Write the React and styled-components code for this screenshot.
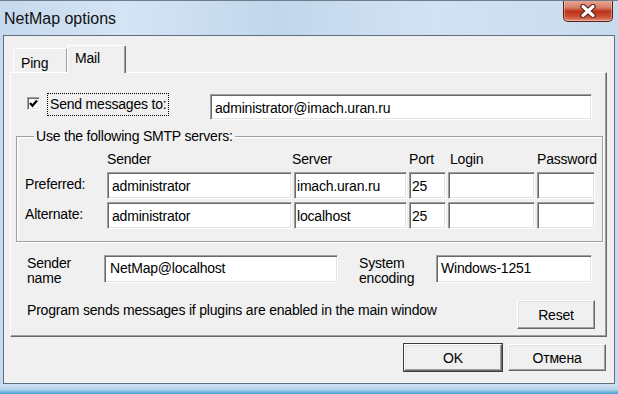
import React from "react";
import styled, { createGlobalStyle } from "styled-components";

const GlobalStyle = createGlobalStyle`
  html, body {
    margin: 0;
    padding: 0;
    background: #c8dcef;
  }
  body {
    font-family: "Liberation Sans", Arial, sans-serif;
    font-size: 14px;
    letter-spacing: -0.2px;
    color: #000;
  }
`;

const WindowDiv = styled.div`
  width: 618px;
  height: 394px;
  display: flex;
  flex-direction: column;
  box-sizing: border-box;
  border-top: 1px solid #6d7d8e;
  background: linear-gradient(
    90deg,
    #c6d9ed 0%,
    #d4e4f4 20%,
    #c2d7ec 45%,
    #d2e2f3 70%,
    #c8dbee 100%
  );
  overflow: hidden;
`;

const TitleBarDiv = styled.div`
  height: 34px;
  display: flex;
  align-items: flex-start;
  padding-left: 4px;
`;

const TitleSpan = styled.span`
  margin-top: 9px;
  font-size: 16px;
  letter-spacing: 0;
  color: #111;
`;

const CloseButton = styled.div`
  margin-left: auto;
  margin-right: 5px;
  margin-top: -1px;
  width: 48px;
  height: 21px;
  display: flex;
  align-items: center;
  justify-content: center;
  border: 1px solid #5b1d12;
  border-top: none;
  border-radius: 0 0 5px 5px;
  background: linear-gradient(
    180deg,
    #e8ab98 0%,
    #d7806a 35%,
    #bd3219 55%,
    #cb5033 80%,
    #de9078 100%
  );
  box-shadow: inset 0 0 0 1px rgba(255, 255, 255, 0.35);
`;

const ClientDiv = styled.div`
  margin: 0 3px;
  height: 349px;
  box-sizing: border-box;
  border: 1px solid #5f6f80;
  background: #f0f0f0;
  display: flex;
  flex-direction: column;
`;

const BottomFrameDiv = styled.div`
  flex: 1;
  background: linear-gradient(180deg, #d4e3f3 0%, #b4d1ea 55%, #3f9fd4 100%);
`;

const TabRowDiv = styled.div`
  display: flex;
  align-items: flex-end;
  height: 28px;
  margin-top: 9px;
  padding-left: 9px;
  position: relative;
  z-index: 1;
  margin-bottom: -1px;
`;

const Tab = styled.div`
  box-sizing: border-box;
  width: ${(p) => p.$width}px;
  height: ${(p) => (p.$active ? 28 : 24)}px;
  margin-bottom: ${(p) => (p.$active ? 0 : 1)}px;
  padding: ${(p) => (p.$active ? "4px 0 0 7px" : "6px 0 0 7px")};
  background: #f0f0f0;
  border-top: 1px solid #fff;
  border-left: 1px solid #fff;
  border-right: 1px solid ${(p) => (p.$active ? "#696969" : "#a0a0a0")};
  box-shadow: ${(p) => (p.$active ? "inset -1px 0 #a0a0a0" : "none")};
  border-radius: 2px 2px 0 0;
`;

const PanelDiv = styled.div`
  margin: 0 7px 0 6px;
  height: 265px;
  box-sizing: border-box;
  border-top: 1px solid #fff;
  border-left: 1px solid #fff;
  border-right: 1px solid #696969;
  border-bottom: 1px solid #696969;
  box-shadow: inset -1px -1px #a0a0a0;
  display: flex;
  flex-direction: column;
`;

const CheckRowDiv = styled.div`
  display: flex;
  align-items: flex-start;
  margin-top: 21px;
  padding-left: 16px;
`;

const CheckGroupDiv = styled.div`
  width: 183px;
  display: flex;
  align-items: flex-start;
`;

const CheckBox = styled.div`
  width: 13px;
  height: 13px;
  box-sizing: border-box;
  margin-top: 3px;
  background: #fff;
  border: 1px solid;
  border-color: #a0a0a0 #fff #fff #a0a0a0;
  box-shadow: inset 1px 1px #696969, inset -1px -1px #e3e3e3;
  display: flex;
  align-items: center;
  justify-content: center;
`;

const FocusLabel = styled.span`
  margin-left: 7px;
  margin-top: -1px;
  padding: 2px 2px 3px 2px;
  border: 1px dotted #000;
  line-height: 16px;
`;

const TextBox = styled.div`
  box-sizing: border-box;
  width: ${(p) => p.$width}px;
  height: ${(p) => p.$height || 27}px;
  background: #fff;
  border: 1px solid;
  border-color: #a0a0a0 #fff #fff #a0a0a0;
  box-shadow: inset 1px 1px #696969, inset -1px -1px #e3e3e3;
  padding: ${(p) => p.$pad || "5px 0 0 4px"};
  white-space: nowrap;
  overflow: hidden;
  line-height: 16px;
`;

const GroupFieldset = styled.fieldset`
  margin: 8px 3px 0 5px;
  padding: 8px 8px 12px 10px;
  border: 1px solid #a0a0a0;
  box-shadow: inset 1px 1px #fff, 1px 1px #fff;
  min-width: 0;
`;

const GroupLegend = styled.legend`
  padding: 0 2px;
  margin-left: 7px;
  line-height: 16px;
`;

const ServerGrid = styled.div`
  display: grid;
  grid-template-columns: 78px 185px 113px 37px 87px 58px;
  grid-template-rows: 17px 27px 27px;
  column-gap: 2px;
  row-gap: 3px;
`;

const HeaderCell = styled.span`
  line-height: 17px;
  margin-left: ${(p) => p.$shift || 0}px;
  margin-top: -1px;
`;

const RowLabel = styled.span`
  align-self: center;
  padding-bottom: 4px;
  margin-left: -2px;
`;

const SenderRowDiv = styled.div`
  display: flex;
  align-items: flex-start;
  margin-top: 13px;
  padding-left: 16px;
`;

const TwoLineLabel = styled.span`
  width: ${(p) => p.$width}px;
  line-height: 15px;
  margin-top: 1px;
  margin-left: ${(p) => p.$offset || 0}px;
`;

const NoteRowDiv = styled.div`
  display: flex;
  align-items: center;
  margin-top: 14px;
  padding-left: 16px;
  padding-right: 11px;
`;

const NoteText = styled.span`
  flex: 1;
  margin-top: -9px;
`;

const Button = styled.div`
  box-sizing: border-box;
  width: ${(p) => p.$width}px;
  height: ${(p) => p.$height || 29}px;
  display: flex;
  align-items: center;
  justify-content: center;
  background: #f0f0f0;
  border: 1px solid;
  border-color: #fff #696969 #696969 #fff;
  box-shadow: inset -1px -1px #a0a0a0, inset 1px 1px #e3e3e3;
  outline: ${(p) => (p.$default ? "1px solid #3c3c3c" : "none")};
  outline-offset: 0;
`;

const FooterDiv = styled.div`
  display: flex;
  justify-content: flex-end;
  gap: 6px;
  margin-top: 7px;
  padding-right: 8px;
`;

const CloseGlyph = () => (
  <svg width="20" height="14" viewBox="0 0 20 14">
    <path
      d="M5 2.5 L15 11.5 M15 2.5 L5 11.5"
      stroke="#5a1e14"
      strokeWidth="5.5"
      strokeLinecap="round"
    />
    <path
      d="M5 2.5 L15 11.5 M15 2.5 L5 11.5"
      stroke="#fff"
      strokeWidth="3.2"
      strokeLinecap="round"
    />
  </svg>
);

const CheckMark = () => (
  <svg width="9" height="9" viewBox="0 0 9 9">
    <path d="M1 4 L3.5 6.8 L8 1.5" stroke="#000" strokeWidth="2.2" fill="none" />
  </svg>
);

const servers = [
  { label: "Preferred:", sender: "administrator", server: "imach.uran.ru", port: "25" },
  { label: "Alternate:", sender: "administrator", server: "localhost", port: "25" },
];

const App = () => {
  return (
    <>
      <GlobalStyle />
      <WindowDiv>
        <TitleBarDiv>
          <TitleSpan>NetMap options</TitleSpan>
          <CloseButton>
            <CloseGlyph />
          </CloseButton>
        </TitleBarDiv>

        <ClientDiv>
          <TabRowDiv>
            <Tab $width={54}>Ping</Tab>
            <Tab $width={59} $active>
              Mail
            </Tab>
          </TabRowDiv>

          <PanelDiv>
            <CheckRowDiv>
              <CheckGroupDiv>
                <CheckBox>
                  <CheckMark />
                </CheckBox>
                <FocusLabel>Send messages to:</FocusLabel>
              </CheckGroupDiv>
              <TextBox $width={382} $height={26}>
                administrator@imach.uran.ru
              </TextBox>
            </CheckRowDiv>

            <GroupFieldset>
              <GroupLegend>Use the following SMTP servers:</GroupLegend>
              <ServerGrid>
                <span />
                <HeaderCell>Sender</HeaderCell>
                <HeaderCell $shift={-2}>Server</HeaderCell>
                <HeaderCell>Port</HeaderCell>
                <HeaderCell $shift={2}>Login</HeaderCell>
                <HeaderCell>Password</HeaderCell>
                {servers.map((row) => (
                  <React.Fragment key={row.label}>
                    <RowLabel>{row.label}</RowLabel>
                    <TextBox $width={185}>{row.sender}</TextBox>
                    <TextBox $width={113} $pad="5px 0 0 2px">
                      {row.server}
                    </TextBox>
                    <TextBox $width={37} $pad="5px 0 0 2px">
                      {row.port}
                    </TextBox>
                    <TextBox $width={87} />
                    <TextBox $width={58} />
                  </React.Fragment>
                ))}
              </ServerGrid>
            </GroupFieldset>

            <SenderRowDiv>
              <TwoLineLabel $width={77}>
                Sender
                <br />
                name
              </TwoLineLabel>
              <TextBox $width={234} $height={28} $pad="4px 0 0 5px">
                NetMap@localhost
              </TextBox>
              <TwoLineLabel $width={77} $offset={21}>
                System
                <br />
                encoding
              </TwoLineLabel>
              <TextBox $width={156} $height={28} $pad="4px 0 0 4px">
                Windows-1251
              </TextBox>
            </SenderRowDiv>

            <NoteRowDiv>
              <NoteText>
                Program sends messages if plugins are enabled in the main window
              </NoteText>
              <Button $width={78}>Reset</Button>
            </NoteRowDiv>
          </PanelDiv>

          <FooterDiv>
            <Button $width={98} $height={27} $default>
              OK
            </Button>
            <Button $width={98} $height={27}>
              Отмена
            </Button>
          </FooterDiv>
        </ClientDiv>

        <BottomFrameDiv />
      </WindowDiv>
    </>
  );
};

export default App;
